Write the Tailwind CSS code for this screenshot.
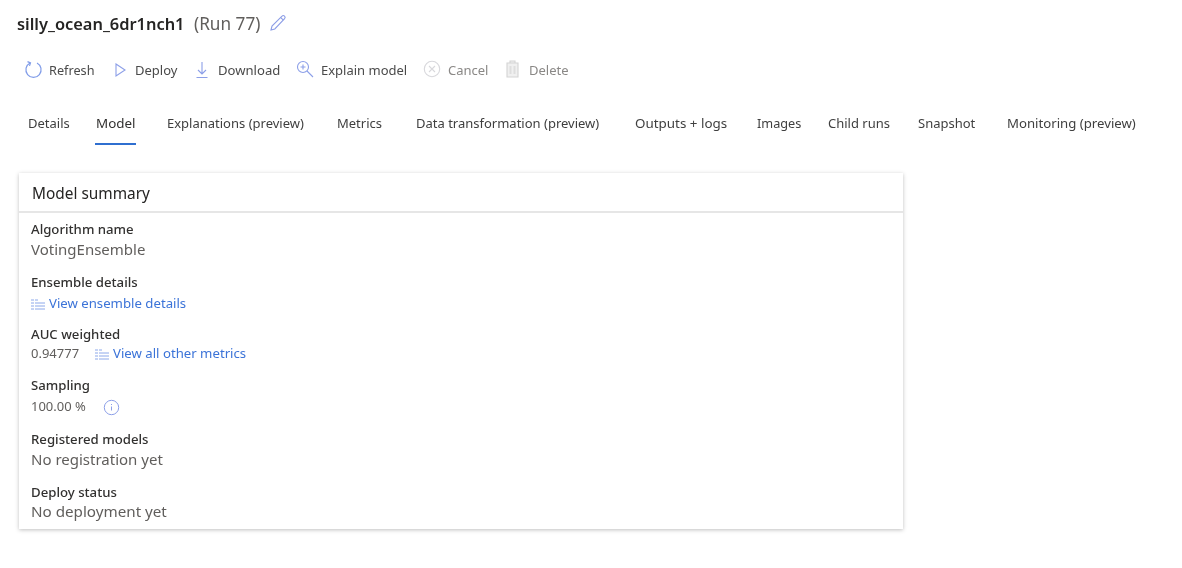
<!DOCTYPE html>
<html><head><meta charset="utf-8"><script src="https://cdn.jsdelivr.net/npm/@tailwindcss/browser@4"></script></head>
<body class="bg-white font-['Noto_Sans','Open_Sans',sans-serif] text-[#323130] w-[1182px] h-[568px] overflow-hidden">
<div class="pl-[17px] pt-[12px] blur-[0.3px]">
  <div class="flex items-center h-[24px] whitespace-nowrap">
    <span class="font-semibold w-[167px] text-[16.4px] text-[#252423]">silly_ocean_6dr1nch1</span>
    <span class="ml-[10px] w-[67px] text-[17.2px] text-[#605e5c]">(Run 77)</span>
    <svg class="ml-[8px] -mt-[3px]" width="18" height="18" viewBox="0 0 18 18" fill="none" stroke="#8c9de6" stroke-width="1.1"><path d="M2 16l1-4L13 2.2a1.6 1.6 0 0 1 2.6 2.4L5.8 15z"/><path d="M11.8 3.6l2.6 2.6"/></svg>
  </div>
  <div class="flex items-center h-[22px] mt-[24px] text-[13px] whitespace-nowrap ml-[7px]">
    <svg class="-mt-[3px]" width="19" height="19" viewBox="0 0 19 19" fill="none" stroke="#7f9be8" stroke-width="1.2"><path d="M6 3a7.6 7.6 0 1 0 7 0"/><path d="M3.5 1.6l3 1.3-1 3"/></svg>
    <span class="ml-[6px] w-[46px] text-[12.7px] text-[#4a4a4a]">Refresh</span>
    <svg class="ml-[19px] -mt-[2px]" width="13" height="16" viewBox="0 0 13 16" fill="none" stroke="#8c9fe8" stroke-width="1.1"><path d="M2 2l9 6-9 6z"/></svg>
    <span class="ml-[8px] w-[44px] text-[#4a4a4a]">Deploy</span>
    <svg class="ml-[16px] -mt-[3px]" width="14" height="18" viewBox="0 0 14 18" fill="none" stroke="#8c9fe8" stroke-width="1.1"><path d="M7 1v12M3 9l4 4 4-4M1.5 16.5h11"/></svg>
    <span class="ml-[9px] w-[63px] text-[13.1px] text-[#4a4a4a]">Download</span>
    <svg class="ml-[15px] -mt-[5px]" width="18" height="18" viewBox="0 0 18 18" fill="none" stroke="#8c9fe8" stroke-width="1.1"><circle cx="7" cy="7" r="5.5"/><path d="M11 11l6 6M7 4.5v5M4.5 7h5"/></svg>
    <span class="ml-[7px] w-[87px] text-[#4a4a4a]">Explain model</span>
    <svg class="ml-[15px] -mt-[4px]" width="18" height="18" viewBox="0 0 18 18" fill="none" stroke="#d8d8dc" stroke-width="1.1"><circle cx="9" cy="9" r="7.7"/><path d="M6 6l6 6M12 6l-6 6"/></svg>
    <span class="ml-[7px] w-[41px] text-[#8a8886]">Cancel</span>
    <svg class="ml-[16px] -mt-[4px]" width="15" height="18" viewBox="0 0 15 18" fill="#f0f0f0" stroke="#d4d4d4" stroke-width="1.1"><path d="M2 3h11v14H2zM5 3V1h5v2"/><path d="M5.5 6v8M9.5 6v8" stroke="#dedede" stroke-width="2"/></svg>
    <span class="ml-[9px] w-[40px] text-[#8a8886]">Delete</span>
  </div>
  <nav class="flex h-[63px] mt-[8px] text-[13px] leading-[19px] whitespace-nowrap ml-[11px] text-[#3f3f3f]">
    <span class="w-[42px] pt-[24px]">Details</span>
    <span class="ml-[25px] w-[41px] h-[55px] pl-[1px] pt-[24px] border-b-2 border-[#2f6fd0] text-[13.4px] text-[#323130]">Model</span>
    <span class="ml-[31px] w-[139px] pt-[24px]">Explanations (preview)</span>
    <span class="ml-[31px] w-[46px] pt-[24px]">Metrics</span>
    <span class="ml-[33px] w-[186px] pt-[24px]">Data transformation (preview)</span>
    <span class="ml-[33px] w-[95px] pt-[24px] text-[13.4px]">Outputs + logs</span>
    <span class="ml-[27px] w-[45px] pt-[24px] text-[12.7px]">Images</span>
    <span class="ml-[26px] w-[62px] pt-[24px]">Child runs</span>
    <span class="ml-[28px] w-[59px] pt-[24px]">Snapshot</span>
    <span class="ml-[30px] w-[131px] pt-[24px] text-[13.2px]">Monitoring (preview)</span>
  </nav>
  <section class="ml-[2px] mt-[20px] w-[884px] h-[356px] bg-white shadow-[0_1px_4px_rgba(0,0,0,0.25)]">
    <h2 class="h-[40px] flex items-center pl-[13px] pt-[3px] text-[15.4px] text-[#252423] border-b-2 border-[#e6e6e6]">Model summary</h2>
    <div class="pl-[12px] pt-[7px] whitespace-nowrap">
      <div class="h-[52.5px]"><div class="text-[13.2px] leading-[18px] font-medium">Algorithm name</div><div class="text-[15px] leading-[22px] text-[#605e5c]">VotingEnsemble</div></div>
      <div class="h-[52.5px]"><div class="text-[13.2px] leading-[18px] font-medium">Ensemble details</div>
        <div class="flex items-center h-[26px] text-[13.2px] text-[#3b73d8]"><svg width="15" height="12" viewBox="0 0 15 12" fill="none" stroke="#8ca8ea"><path d="M0 2h3M0 5h3M0 8h3M0 11h3M4 2h3M4 5h10M4 8h10M4 11h10"/></svg><span class="ml-[3px]">View ensemble details</span></div></div>
      <div class="h-[51px]"><div class="text-[13.2px] leading-[18px] font-medium">AUC weighted</div>
        <div class="flex items-center h-[22px] text-[13px] text-[#605e5c]"><span class="w-[64px]">0.94777</span><svg width="15" height="12" viewBox="0 0 15 12" fill="none" stroke="#8ca8ea"><path d="M0 2h3M0 5h3M0 8h3M0 11h3M4 2h3M4 5h10M4 8h10M4 11h10"/></svg><span class="ml-[3px] text-[13.2px] text-[#3b73d8]">View all other metrics</span></div></div>
      <div class="h-[54px]"><div class="text-[13.2px] leading-[18px] font-medium">Sampling</div>
        <div class="flex items-center h-[26px] text-[13px] text-[#605e5c]"><span class="w-[72px]">100.00 %</span><svg width="17" height="17" viewBox="0 0 17 17" fill="none" stroke="#8c9fe8"><circle cx="8.5" cy="8.5" r="7.2"/><path d="M8.5 7.5v4M8.5 5v1"/></svg></div></div>
      <div class="h-[52.5px]"><div class="text-[13.2px] leading-[18px] font-medium">Registered models</div><div class="text-[15px] leading-[23px] text-[#605e5c]">No registration yet</div></div>
      <div><div class="text-[13.2px] leading-[18px] font-medium">Deploy status</div><div class="text-[15.2px] leading-[21px] text-[#605e5c]">No deployment yet</div></div>
    </div>
  </section>
</div>
</body></html>
